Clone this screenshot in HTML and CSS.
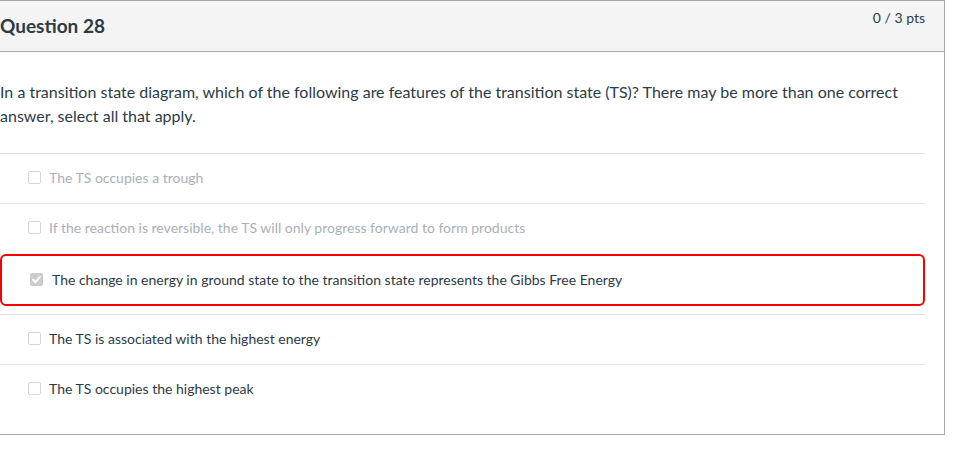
FILE: index.html
```html
<!DOCTYPE html>
<html lang="en">
<head>
  <meta charset="UTF-8">
  <title>Question 28</title>
  <link rel="stylesheet" href="styles.css">
</head>
<body>

<!-- Quiz question card -->
<div class="question">
  <div class="question-header">
    <span class="question-name">Question 28</span>
    <span class="question-points">0 / 3 pts</span>
  </div>

  <div class="question-body">
    <p class="question-text">In a transition state diagram, which of the following are features of the transition state (TS)? There may be more than one correct answer, select all that apply.</p>

    <ul class="answers">
      <li class="answer disabled">
        <span class="box"></span>
        <span class="label">The TS occupies a trough</span>
      </li>
      <li class="answer disabled">
        <span class="box"></span>
        <span class="label">If the reaction is reversible, the TS will only progress forward to form products</span>
      </li>
      <li class="answer marked">
        <span class="box checked">
          <svg viewBox="0 0 13 13" width="13" height="13"><path d="M3 6.8 L5.4 9.2 L10 3.9" fill="none" stroke="#fff" stroke-width="2" stroke-linecap="round" stroke-linejoin="round"/></svg>
        </span>
        <span class="label">The change in energy in ground state to the transition state represents the Gibbs Free Energy</span>
      </li>
      <li class="answer">
        <span class="box"></span>
        <span class="label">The TS is associated with the highest energy</span>
      </li>
      <li class="answer">
        <span class="box"></span>
        <span class="label">The TS occupies the highest peak</span>
      </li>
    </ul>
  </div>
</div>

</body>
</html>
```

FILE: styles.css
```css
/* Colours */
:root {
  --text-main: #2d3b45;
  --text-muted: #a9b1b8;
  --card-border: #a8a8a8;
  --header-bg: #f4f4f4;
  --rule: #e2e2e2;
  --mark: #f50000;
}
html, body {
  margin: 0;
  padding: 0;
  background: #fff;
  color: var(--text-main);
  font-family: Lato, "Liberation Sans", sans-serif;
}

/* Card */
.question {
  margin-left: -21px;
  width: 964px;
  border: 1px solid var(--card-border);
}
.question-header {
  display: flex;
  justify-content: space-between;
  height: 50px;
  padding: 0 19px 0 20px;
  background: var(--header-bg);
  border-bottom: 1px solid var(--card-border);
}
.question-name {
  font-size: 19px;
  font-weight: 700;
  line-height: 50px;
}
.question-points {
  font-size: 14px;
  line-height: 20px;
  padding-top: 7px;
}

/* Body */
.question-body {
  padding: 28px 19px 20px 20px;
}
.question-text {
  margin: 0 0 25px;
  font-size: 16px;
  line-height: 24px;
}

/* Answers */
.answers {
  list-style: none;
  margin: 0;
  padding: 0;
}
.answer {
  display: flex;
  align-items: center;
  gap: 8px;
  height: 49px;
  box-sizing: border-box;
  height: 50px;
  padding: 0 0 2px 28px;
  border-top: 1px solid var(--rule);
  font-size: 14px;
}
.answer.disabled { color: var(--text-muted); }
.answer.marked {
  margin-top: 1px;
  margin-bottom: 8px;
  padding: 0 0 2px 28px;
  height: 52px;
  border: 2px solid var(--mark);
  border-radius: 6px;
  gap: 9px;
}
.box {
  width: 11px;
  height: 11px;
  border: 1px solid #d6d6d6;
  border-radius: 2px;
  background: #fff;
  flex: none;
}
.box.checked {
  width: 13px;
  height: 13px;
  border: none;
  background: #cbcbcb;
  display: flex;
}
```
